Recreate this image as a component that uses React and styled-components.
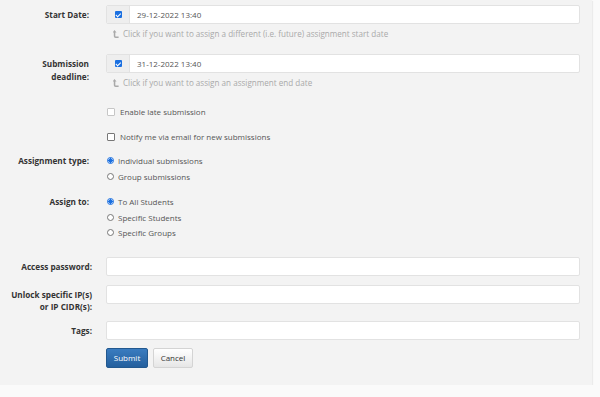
import React from 'react';
import styled, { createGlobalStyle } from 'styled-components';

const GlobalStyle = createGlobalStyle`
  html, body {
    margin: 0;
    padding: 0;
    background: #fafafa;
    font-family: "Open Sans", "Liberation Sans", sans-serif;
    color: #333;
  }
`;

const LevelUpIcon = () => (
  <svg width="6" height="8" viewBox="0 0 6 8">
    <path d="M1.5 0 L3.5 2.6 L2.3 2.6 L2.3 6 Q2.3 6.6 3 6.6 L5.6 6.6 L5.6 8 L2.6 8 Q0.8 8 0.8 6.2 L0.8 2.6 L-0.5 2.6 Z" fill="#a9a9a9" />
  </svg>
);

const App = () => {
  return (
    <>
      <GlobalStyle />
      <Panel>
        <FormGroup $mb={14}>
          <Label>Start Date:</Label>
          <div>
            <InputGroup>
              <Addon><CheckMark /></Addon>
              <DateInput>29-12-2022 13:40</DateInput>
            </InputGroup>
            <Help><LevelUpIcon /> Click if you want to assign a different (i.e. future) assignment start date</Help>
          </div>
        </FormGroup>

        <FormGroup $mb={17}>
          <Label>Submission<br />deadline:</Label>
          <div>
            <InputGroup>
              <Addon><CheckMark /></Addon>
              <DateInput>31-12-2022 13:40</DateInput>
            </InputGroup>
            <Help><LevelUpIcon /> Click if you want to assign an assignment end date</Help>
          </div>
        </FormGroup>

        <FormGroup $mb={13}>
          <span />
          <CheckRow><Box $disabled /> Enable late submission</CheckRow>
        </FormGroup>

        <FormGroup $mb={10}>
          <span />
          <CheckRow><Box /> Notify me via email for new submissions</CheckRow>
        </FormGroup>

        <FormGroup $mb={10}>
          <Label $pt={1.5}>Assignment type:</Label>
          <RadioList>
            <RadioRow><Radio $checked /> Individual submissions</RadioRow>
            <RadioRow><Radio /> Group submissions</RadioRow>
          </RadioList>
        </FormGroup>

        <FormGroup $mb={16}>
          <Label $pt={1.5}>Assign to:</Label>
          <RadioList>
            <RadioRow><Radio $checked /> To All Students</RadioRow>
            <RadioRow><Radio /> Specific Students</RadioRow>
            <RadioRow><Radio /> Specific Groups</RadioRow>
          </RadioList>
        </FormGroup>

        <FormGroup $mb={9} $pr={14}>
          <Label>Access password:</Label>
          <TextInput />
        </FormGroup>

        <FormGroup $mb={7} $pr={14}>
          <Label>Unlock specific IP(s)<br />or IP CIDR(s):</Label>
          <TextInput />
        </FormGroup>

        <FormGroup $mb={8} $pr={14}>
          <Label>Tags:</Label>
          <TextInput />
        </FormGroup>

        <FormGroup $mb={0}>
          <span />
          <Buttons>
            <SubmitButton>Submit</SubmitButton>
            <CancelButton>Cancel</CancelButton>
          </Buttons>
        </FormGroup>
      </Panel>
    </>
  );
};

const Panel = styled.div`
  width: 592px;
  height: 385px;
  box-sizing: border-box;
  padding: 5px 12px 0 0;
  background: #f3f3f3;
  box-shadow: 1px 1px 1px rgba(0, 0, 0, 0.06);
`;

const FormGroup = styled.div`
  display: grid;
  grid-template-columns: ${(p) => 106 - (p.$pr ?? 17)}px 1fr;
  column-gap: ${(p) => p.$pr ?? 17}px;
  margin-bottom: ${(p) => p.$mb}px;
`;

const Label = styled.label`
  text-align: right;
  font-weight: 700;
  font-size: 8.2px;
  line-height: 12.5px;
  padding-top: ${(p) => p.$pt ?? 4}px;
  color: #333;
`;

const InputGroup = styled.div`
  display: flex;
  height: 19px;
  box-sizing: border-box;
  border: 1px solid #e2e2e2;
  border-radius: 2px;
  background: #fff;
  overflow: hidden;
`;

const Addon = styled.div`
  width: 22px;
  background: #eeeeee;
  border-right: 1px solid #e2e2e2;
  display: flex;
  align-items: center;
  justify-content: center;
`;

const CheckMark = styled.span`
  width: 7px;
  height: 7px;
  border-radius: 1px;
  background: #1a6fe0;
  position: relative;
  &::after {
    content: '';
    position: absolute;
    left: 2.2px;
    top: 0.6px;
    width: 1.6px;
    height: 3.6px;
    border: solid #fff;
    border-width: 0 1px 1px 0;
    transform: rotate(45deg);
  }
`;

const DateInput = styled.div`
  flex: 1;
  display: flex;
  align-items: center;
  padding-left: 7px;
  font-size: 8px;
  color: #555;
`;

const Help = styled.div`
  display: flex;
  align-items: center;
  gap: 4px;
  margin-top: 4px;
  padding-left: 7px;
  font-size: 8.1px;
  line-height: 12px;
  color: #a9a9a9;
`;

const CheckRow = styled.div`
  display: flex;
  align-items: center;
  gap: 5px;
  font-size: 8px;
  line-height: 12px;
  color: #555;
  padding-left: 1px;
`;

const Box = styled.span`
  width: 6px;
  height: 6px;
  border: 1px solid ${(p) => (p.$disabled ? '#c6c6c6' : '#777')};
  border-radius: 1px;
  background: #fff;
`;

const RadioList = styled.div`
  display: flex;
  flex-direction: column;
`;

const RadioRow = styled.div`
  display: flex;
  align-items: center;
  gap: 4px;
  height: 15.5px;
  font-size: 8px;
  color: #555;
  padding-left: 1px;
`;

const Radio = styled.span`
  width: 7px;
  height: 7px;
  border-radius: 50%;
  box-sizing: border-box;
  border: 1px solid ${(p) => (p.$checked ? '#1a6fe0' : '#777')};
  background: ${(p) => (p.$checked ? 'radial-gradient(circle, #1a6fe0 0 2px, #fff 2.3px)' : '#fff')};
`;

const TextInput = styled.div`
  height: 19px;
  box-sizing: border-box;
  border: 1px solid #e2e2e2;
  border-radius: 2px;
  background: #fff;
`;

const Buttons = styled.div`
  display: flex;
  gap: 5px;
`;

const BaseButton = styled.button`
  height: 20px;
  box-sizing: border-box;
  font-family: "Open Sans", "Liberation Sans", sans-serif;
  font-size: 8px;
  border-radius: 2px;
  padding: 0;
  cursor: pointer;
`;

const SubmitButton = styled(BaseButton)`
  width: 42px;
  color: #fff;
  border: 1px solid #22588f;
  background: linear-gradient(#3a7cc0, #245f9d);
`;

const CancelButton = styled(BaseButton)`
  width: 40px;
  color: #333;
  border: 1px solid #d4d4d4;
  background: linear-gradient(#ffffff, #e6e6e6);
`;

export default App;
